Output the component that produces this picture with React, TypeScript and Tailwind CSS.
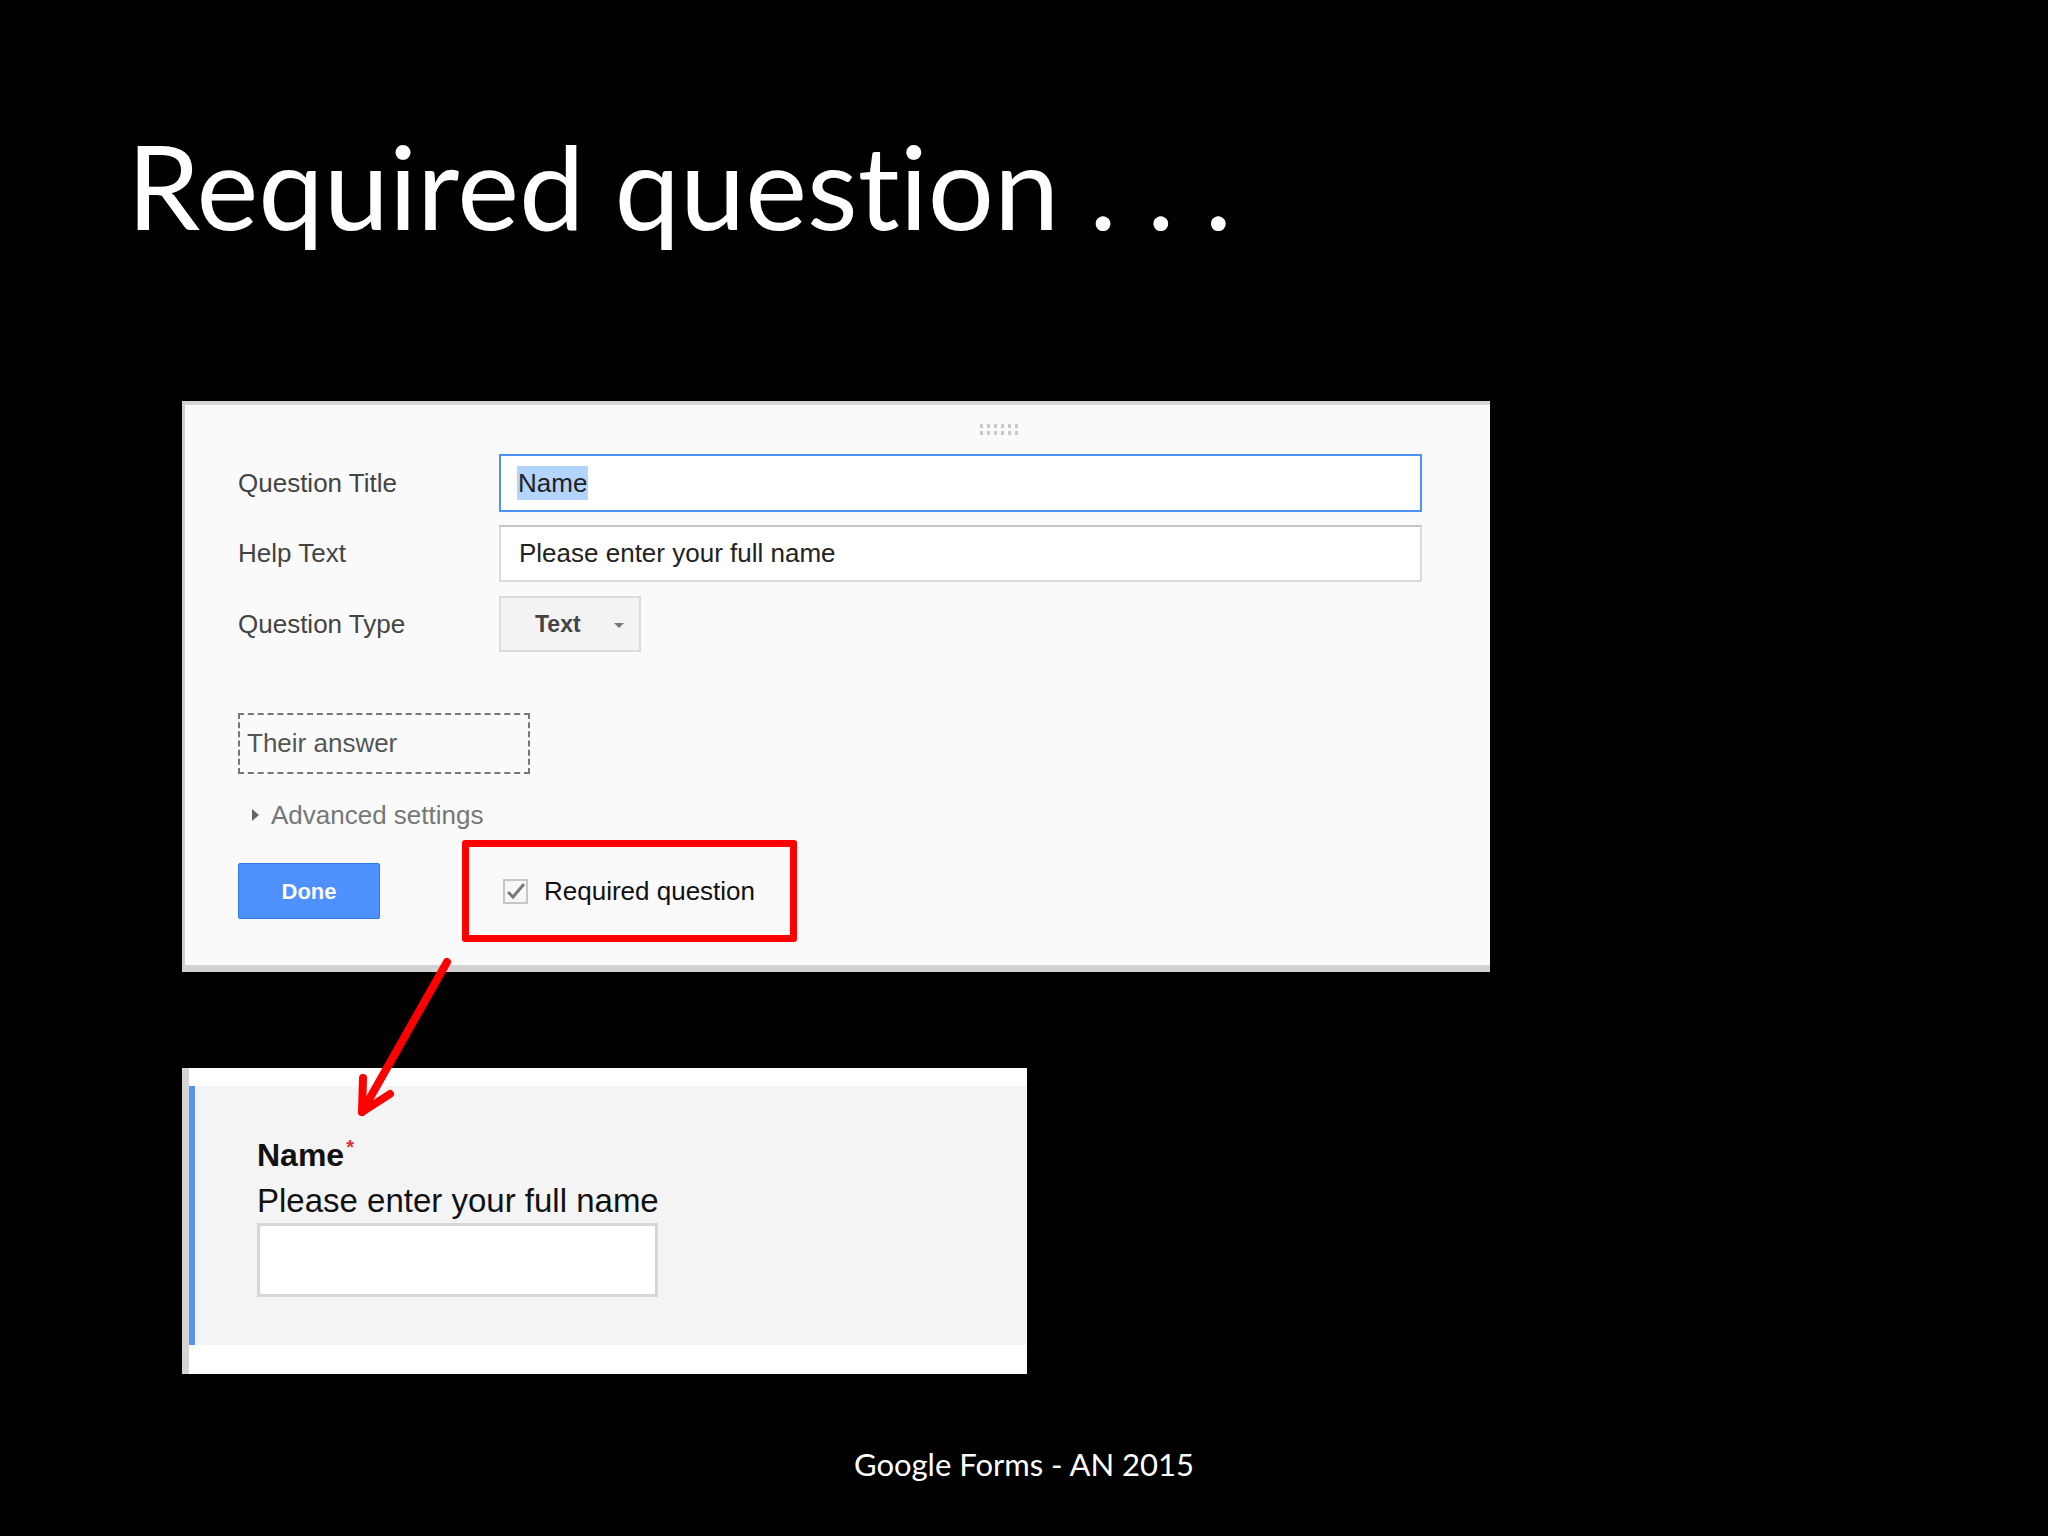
import React from "react";

const ui = "font-['Liberation_Sans',Arial,sans-serif]";

function DragHandle() {
  const dots = [0, 1, 2, 3, 4, 5];
  return (
    <div className="flex flex-col gap-[3px]">
      {[0, 1].map((r) => (
        <div key={r} className="flex gap-[4px]">
          {dots.map((d) => (
            <div key={d} className="h-[4px] w-[3px] bg-[#c8c8c8]" />
          ))}
        </div>
      ))}
    </div>
  );
}

function Label({ children }: { children: React.ReactNode }) {
  return (
    <div className="w-[261px] shrink-0 text-[26px] text-[#444]">{children}</div>
  );
}

function EditorPanel() {
  return (
    <div
      className={`${ui} ml-[182px] mt-[157px] flex h-[571px] w-[1308px] flex-col border-t-4 border-l-[3px] border-b-[7px] border-t-[#d6d6d6] border-l-[#cfcfcf] border-b-[#d2d2d2] bg-[#fafafa] pl-[53px]`}
    >
      {/* drag handle */}
      <div className="ml-[742px] mt-[19px] h-[11px]">
        <DragHandle />
      </div>

      {/* question title */}
      <div className="mt-[19px] flex h-[58px] items-center">
        <Label>Question Title</Label>
        <div className="flex h-full w-[923px] items-center border-2 border-[#4d90fe] bg-white pl-[16px] text-[26px] text-[#222]">
          <span className="bg-[#b3d4fc] px-[1px] leading-[34px]">Name</span>
        </div>
      </div>

      {/* help text */}
      <div className="mt-[13px] flex h-[57px] items-center">
        <Label>Help Text</Label>
        <div className="flex h-full w-[923px] items-center border-2 border-[#dadada] border-t-[#c4c4c4] bg-white pl-[18px] text-[26px] text-[#222]">
          Please enter your full name
        </div>
      </div>

      {/* question type */}
      <div className="mt-[14px] flex h-[56px] items-center">
        <Label>Question Type</Label>
        <div className="flex h-full w-[142px] items-center border-2 border-[#dcdcdc] bg-[#f3f3f3] pl-[34px] text-[23px] font-bold text-[#444]">
          <span>Text</span>
          <span className="ml-[33px] mt-[2px] h-0 w-0 border-x-[5px] border-t-[5px] border-x-transparent border-t-[#777]" />
        </div>
      </div>

      {/* preview of answer */}
      <div className="mt-[61px] flex h-[61px] w-[292px] items-center border-2 border-dashed border-[#777] pl-[7px] text-[26px] text-[#555]">
        Their answer
      </div>

      {/* advanced settings */}
      <div className="mt-[26px] flex h-[30px] items-center text-[26px] text-[#777]">
        <span className="ml-[14px] h-0 w-0 border-y-[6px] border-l-[7px] border-y-transparent border-l-[#666]" />
        <span className="ml-[12px]">Advanced settings</span>
      </div>

      {/* done + required */}
      <div className="mt-[10px] flex items-center">
        <button
          type="button"
          className="h-[56px] w-[142px] rounded-[2px] border border-[#3079ed] bg-[#4d90fe] text-[22px] font-bold text-white"
        >
          Done
        </button>
        <div className="ml-[82px] flex h-[102px] w-[335px] items-center rounded-[3px] border-[7px] border-[#ff0000] pl-[34px]">
          <div className="flex h-[25px] w-[25px] items-center justify-center border-2 border-[#c6c6c6] bg-[#f7f7f7]">
            <svg width="20" height="18" viewBox="0 0 20 18">
              <path
                d="M2 10 L7 15 L18 2"
                fill="none"
                stroke="#7a7a7a"
                strokeWidth="3"
              />
            </svg>
          </div>
          <span className="ml-[16px] text-[26px] text-[#111]">
            Required question
          </span>
        </div>
      </div>
    </div>
  );
}

function PreviewPanel() {
  return (
    <div
      className={`${ui} ml-[182px] mt-[96px] flex h-[306px] w-[845px] flex-col border-l-[7px] border-[#d4d4d4] bg-white pt-[18px]`}
    >
      <div className="h-[259px] border-l-[6px] border-[#5a92f2] bg-[#f4f4f5] pl-[62px] pt-[49px]">
        <div className="text-[32px] font-bold leading-[41px] text-[#111]">
          Name
          <span className="relative top-[-12px] ml-[2px] text-[20px] text-[#d33]">
            *
          </span>
        </div>
        <div className="text-[33px] leading-[41px] text-[#111]">
          Please enter your full name
        </div>
        <div className="mt-[2px] h-[74px] w-[401px] border-[3px] border-[#d6d6d6] bg-white" />
      </div>
    </div>
  );
}

export default function App() {
  return (
    <div className="relative flex h-[1536px] w-[2048px] flex-col overflow-hidden bg-black">
      <h1 className="ml-[127px] mt-[127px] font-['Lato',sans-serif] text-[117px] leading-none text-white [font-variant-ligatures:none]">
        Required question . . .
      </h1>

      <EditorPanel />
      <PreviewPanel />

      <p className="mt-[75px] text-center font-['Lato',sans-serif] text-[31px] leading-none text-white">
        Google Forms - AN 2015
      </p>

      {/* annotation arrow */}
      <svg
        className="pointer-events-none absolute left-0 top-0"
        width="2048"
        height="1536"
        viewBox="0 0 2048 1536"
      >
        <g
          stroke="#ff0000"
          strokeWidth="8"
          strokeLinecap="round"
          strokeLinejoin="round"
          fill="none"
        >
          <path d="M447 962 L362 1112" />
          <path d="M363 1078 L362 1112 L390 1094" />
        </g>
      </svg>
    </div>
  );
}
